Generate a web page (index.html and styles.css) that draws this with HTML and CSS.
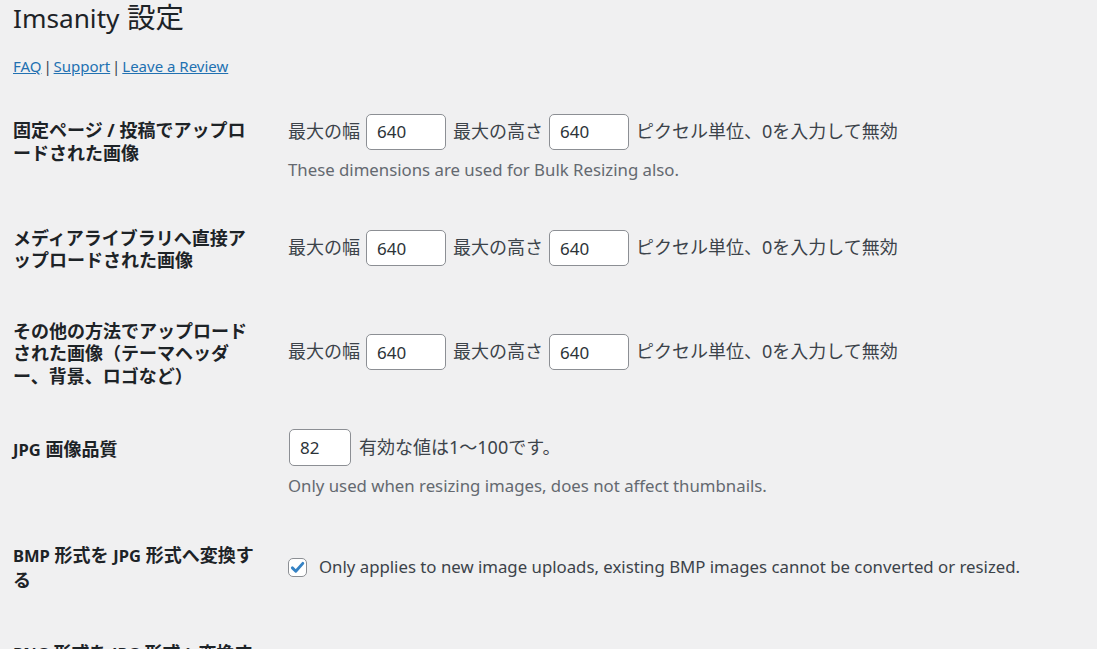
FILE: index.html
```html
<!DOCTYPE html>
<html lang="ja">
<head>
<meta charset="utf-8">
<title>Imsanity 設定</title>
<link rel="stylesheet" href="styles.css">
</head>
<body>
<div class="wrap">
  <h1 class="page-title"><span class="en">Imsanity</span> 設定</h1>
  <p class="links"><a href="#">FAQ</a> | <a href="#">Support</a> | <a href="#">Leave a Review</a></p>
  <table class="form-table">
    <tbody>
      <tr>
        <th>固定ページ / 投稿でアップロ<br>ードされた画像</th>
        <td>
          <div class="field-line">
            <span>最大の幅</span>
            <input class="dim" type="text" value="640">
            <span>最大の高さ</span>
            <input class="dim" type="text" value="640">
            <span>ピクセル単位、0を入力して無効</span>
          </div>
          <p class="description">These dimensions are used for Bulk Resizing also.</p>
        </td>
      </tr>
      <tr class="row-two">
        <th>メディアライブラリへ直接ア<br>ップロードされた画像</th>
        <td>
          <div class="field-line">
            <span>最大の幅</span>
            <input class="dim" type="text" value="640">
            <span>最大の高さ</span>
            <input class="dim" type="text" value="640">
            <span>ピクセル単位、0を入力して無効</span>
          </div>
        </td>
      </tr>
      <tr class="row-three">
        <th>その他の方法でアップロード<br>された画像（テーマヘッダ<br>ー、背景、ロゴなど）</th>
        <td>
          <div class="field-line">
            <span>最大の幅</span>
            <input class="dim" type="text" value="640">
            <span>最大の高さ</span>
            <input class="dim" type="text" value="640">
            <span>ピクセル単位、0を入力して無効</span>
          </div>
        </td>
      </tr>
      <tr class="row-four">
        <th><span class="en">JPG</span> 画像品質</th>
        <td>
          <div class="field-line field-line-wide">
            <input class="small" type="text" value="82">
            <span>有効な値は1～100です。</span>
          </div>
          <p class="description">Only used when resizing images, does not affect thumbnails.</p>
        </td>
      </tr>
      <tr class="row-five">
        <th><span class="en">BMP</span> 形式を <span class="en">JPG</span> 形式へ変換す<br>る</th>
        <td>
          <label class="check-line">
            <span class="check">
              <input type="checkbox" checked>
              <svg class="tick" viewBox="0 0 20 20" width="20" height="20" aria-hidden="true"><path d="M4.6 10.4 L8.2 14 L15.6 5.6" fill="none" stroke="#3582c4" stroke-width="3" stroke-linecap="round" stroke-linejoin="round"/></svg>
            </span>
            <span class="check-text">Only applies to new image uploads, existing BMP images cannot be converted or resized.</span>
          </label>
        </td>
      </tr>
      <tr>
        <th><span class="en">PNG</span> 形式を <span class="en">JPG</span> 形式へ変換す<br>る</th>
        <td></td>
      </tr>
    </tbody>
  </table>
</div>
</body>
</html>
```
FILE: styles.css
```css
html, body {
  margin: 0;
  padding: 0;
  background: #f0f0f1;
}
body {
  font-family: "Noto Sans", "Noto Sans CJK JP", sans-serif;
  color: #3c434a;
  font-size: 16.25px;
  overflow: hidden;
}
.wrap {
  padding: 0 0 0 13px;
}
.en {
  font-size: 0.92em;
}
.page-title {
  margin: 0;
  padding: 0;
  font-size: 28.5px;
  font-weight: 400;
  line-height: 34px;
  color: #1d2327;
}
.links {
  margin: 20px 0 0;
  line-height: 23px;
  font-size: 15px;
  color: #3c434a;
  word-spacing: -2px;
}
.links a {
  color: #2271b1;
  text-decoration: underline;
  word-spacing: normal;
}
.form-table {
  border-collapse: collapse;
  margin-top: 16px;
  table-layout: fixed;
}
.form-table th {
  width: 250px;
  padding: 25px 12.5px 25px 0;
  text-align: left;
  vertical-align: top;
  font-size: 18px;
  font-weight: 700;
  line-height: 22.5px;
  color: #1d2327;
  white-space: nowrap;
}
.form-table .row-two th {
  padding-bottom: 23px;
}
.form-table .row-three th {
  padding-bottom: 22.5px;
}
.form-table .row-four th {
  padding-top: 28px;
}
.form-table .row-five th {
  line-height: 24px;
}
.form-table td {
  padding: 18.75px 12.5px;
  vertical-align: middle;
  font-size: 18px;
  line-height: 1.3;
  color: #3c434a;
}
.field-line {
  display: flex;
  align-items: center;
  gap: 6px;
  white-space: nowrap;
}
.field-line-wide {
  gap: 8px;
}
.field-line input {
  margin: 1px 0;
  box-sizing: border-box;
  height: 36px;
  padding: 0 10px;
  border: 1px solid #8c8f94;
  border-radius: 5px;
  background: #fff;
  color: #2c3338;
  font-family: "Noto Sans", sans-serif;
  font-size: 17px;
}
.field-line input.dim {
  width: 80px;
}
.field-line input.dim + span {
  margin-left: 1px;
}
.field-line input.small {
  width: 62px;
  height: 37px;
  margin-left: 1px;
}
.description {
  margin: 5px 0 0;
  font-size: 16.8px;
  line-height: 27px;
  color: #646970;
}
.check-line {
  display: flex;
  align-items: center;
  gap: 12px;
  white-space: nowrap;
}
.check-text {
  font-size: 16.8px;
  position: relative;
  top: -1px;
}
.check {
  position: relative;
  width: 19px;
  height: 19px;
  flex: none;
}
.check input {
  appearance: none;
  -webkit-appearance: none;
  margin: 0;
  box-sizing: border-box;
  width: 19px;
  height: 19px;
  border: 1px solid #8c8f94;
  border-radius: 5px;
  background: #fff;
  display: block;
}
.check .tick {
  position: absolute;
  left: 0;
  top: 0;
  width: 19px;
  height: 19px;
  pointer-events: none;
}
```
